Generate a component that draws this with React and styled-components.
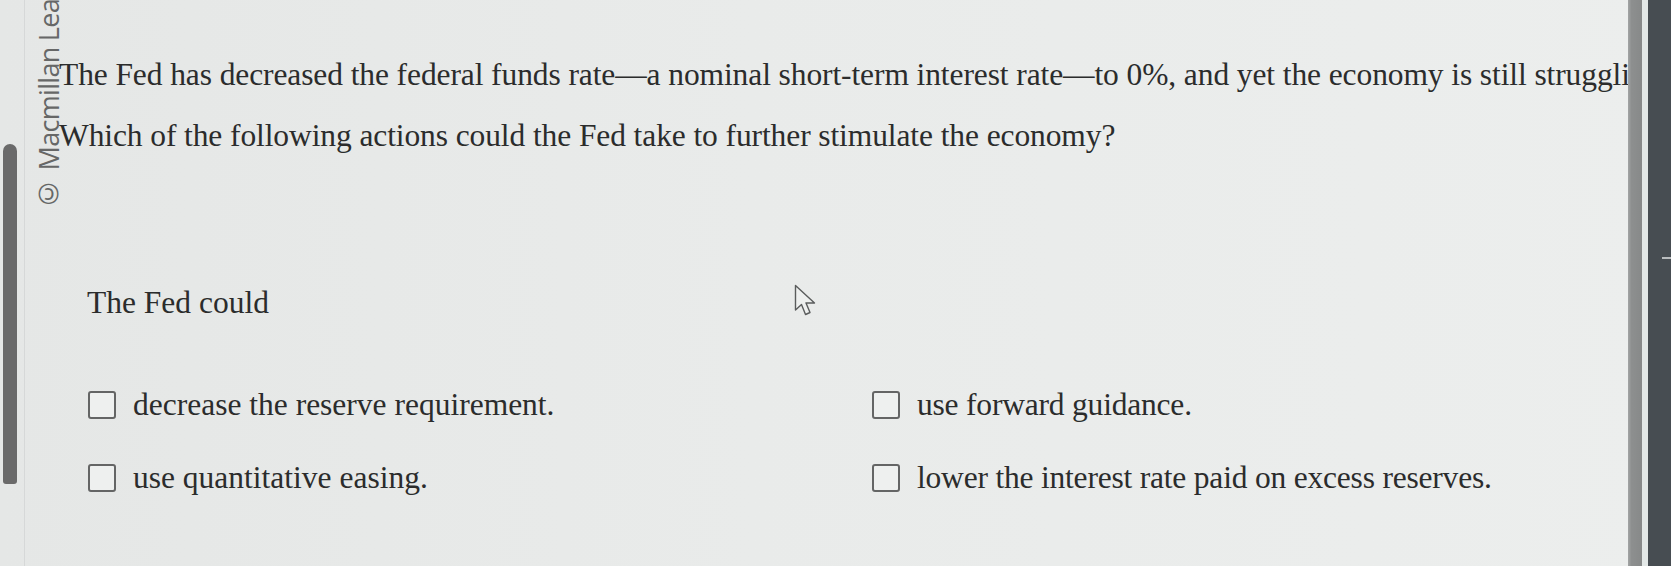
import React from "react";
import styled, { createGlobalStyle } from "styled-components";

const GlobalStyle = createGlobalStyle`
  html, body {
    margin: 0;
    padding: 0;
    overflow: hidden;
  }
  body {
    background: #e8eaea;
  }
`;

const Screen = styled.div`
  position: relative;
  display: flex;
  width: 1671px;
  height: 566px;
  overflow: hidden;
  background: linear-gradient(90deg, #e5e7e6 0%, #e9ebea 45%, #eceeed 100%);
`;

const Gutter = styled.div`
  flex: 0 0 25px;
  display: flex;
  flex-direction: column;
  padding-top: 144px;
  padding-left: 3px;
  box-sizing: border-box;
  border-right: 1px solid #d6d8d8;
`;

const Thumb = styled.div`
  width: 14px;
  height: 340px;
  border-radius: 7px 7px 3px 3px;
  background: #6a6a6a;
`;

const Watermark = styled.div`
  position: absolute;
  left: 35px;
  top: 0;
  height: 213px;
  writing-mode: vertical-rl;
  transform: rotate(180deg);
  white-space: nowrap;
  font-family: "Open Sans", "Liberation Sans", sans-serif;
  font-size: 27px;
  line-height: 27px;
  letter-spacing: -0.7px;
  color: #666767;
`;

const Content = styled.div`
  flex: 1;
  min-width: 0;
  overflow: hidden;
  padding-left: 34px;
  box-sizing: border-box;
  font-family: "Liberation Serif", "Times New Roman", serif;
  font-size: 31.5px;
  line-height: 40px;
  color: #2b2c2c;
  white-space: nowrap;
`;

const Question = styled.p`
  margin: ${({ $top }) => $top}px 0 0;
  letter-spacing: -0.1px;
`;

const Answers = styled.div`
  margin-left: 28px;
`;

const Lead = styled.p`
  margin: 127px 0 0;
`;

const Options = styled.div`
  display: grid;
  grid-template-columns: 784px auto;
  row-gap: 33px;
  margin-top: 62px;
`;

const Option = styled.label`
  display: flex;
  align-items: center;
  gap: 17px;
  height: 40px;
  letter-spacing: ${({ $tight }) => ($tight ? "-0.2px" : "0")};
`;

const Box = styled.span`
  flex: 0 0 auto;
  width: 24px;
  height: 24px;
  border: 2.6px solid #646565;
  border-radius: 3px;
  background: #eef0ef;
  margin-left: 1px;
`;

const RightEdge = styled.div`
  display: flex;
  flex: 0 0 43px;
`;

const EdgeBar = styled.div`
  width: 14px;
  background: linear-gradient(90deg, #a2a4a4 0%, #8d8f8f 25%, #878989 100%);
`;

const EdgeGap = styled.div`
  width: 6px;
  background: #e3e8e7;
`;

const EdgePanel = styled.div`
  flex: 1;
  display: flex;
  flex-direction: column;
  padding-top: 257px;
  padding-left: 14px;
  background: #474d52;
`;

const Dash = styled.div`
  height: 2px;
  background: #b9bcbe;
`;

const Cursor = styled.svg`
  position: absolute;
  left: 794px;
  top: 284px;
`;

const options = [
  { text: "decrease the reserve requirement." },
  { text: "use forward guidance.", tight: true },
  { text: "use quantitative easing." },
  { text: "lower the interest rate paid on excess reserves.", tight: true },
];

export default function App() {
  return (
    <>
      <GlobalStyle />
      <Screen>
        <Gutter>
          <Thumb />
        </Gutter>
        <Content>
          <Question $top={55}>
            The Fed has decreased the federal funds rate—a nominal short-term
            interest rate—to 0%, and yet the economy is still struggling.
          </Question>
          <Question $top={21}>
            Which of the following actions could the Fed take to further
            stimulate the economy?
          </Question>
          <Answers>
            <Lead>The Fed could</Lead>
            <Options>
              {options.map(({ text, tight }) => (
                <Option key={text} $tight={tight}>
                  <Box />
                  {text}
                </Option>
              ))}
            </Options>
          </Answers>
        </Content>
        <RightEdge>
          <EdgeBar />
          <EdgeGap />
          <EdgePanel>
            <Dash />
          </EdgePanel>
        </RightEdge>
        <Watermark>© Macmillan Learning</Watermark>
        <Cursor width="24" height="36" viewBox="0 0 24 36">
          <path
            d="M1.5 1.5 L1.5 26 L7.5 20.5 L11.5 30.5 L16 28.5 L12 19 L20.5 19 Z"
            fill="#eef0ef"
            stroke="#5a5c5c"
            strokeWidth="1.4"
            strokeLinejoin="round"
          />
        </Cursor>
      </Screen>
    </>
  );
}
